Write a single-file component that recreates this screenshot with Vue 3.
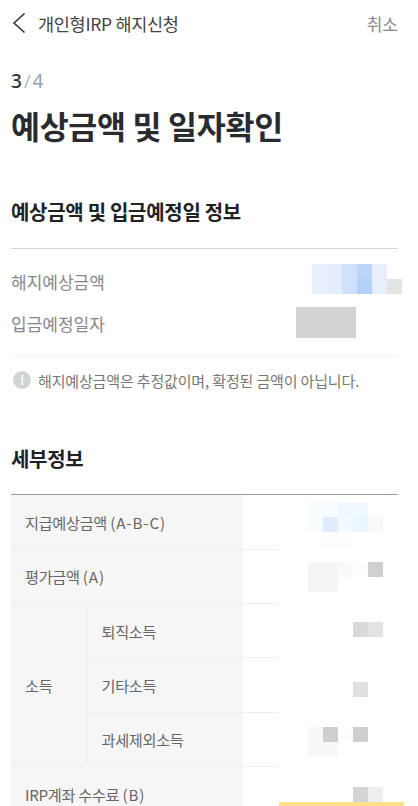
<script setup>
// 가려진 금액 영역 (15px 모자이크)
const amountTiles = [
  ['#e9effb', '#e4edfb', '#cfe0fc', '#bcd4fa', '#e8effb', null],
  ['#e9effb', '#e4edfb', '#cfe0fc', '#b3d0f9', '#e8effb', '#e4e4e4']
]

const tableTiles = [
  [0, 0, '#f7fcff'], [0, 1, '#f7fcff'], [0, 2, '#eff9ff'], [0, 3, '#eff9ff'],
  [1, 0, '#f7fcff'], [1, 1, '#e0ecfb'], [1, 2, '#f3faff'], [1, 3, '#eaf6ff'], [1, 4, '#f9f9f9'],
  [2, 1, '#fdfdfd'], [2, 2, '#fdfdfd'],
  [4, 0, '#f5f5f6'], [4, 1, '#f5f5f6'], [4, 2, '#f9f9f9'], [4, 3, '#fdfdfd'], [4, 4, '#d0d0d2'],
  [5, 0, '#f5f5f6'], [5, 1, '#f5f5f6'],
  [8, 3, '#d9d9db'], [8, 4, '#e3e3e5'],
  [12, 3, '#e0e0e2'],
  [15, 0, '#f8f8fa'], [15, 1, '#cfcfd2'], [15, 2, '#fdfdfd'], [15, 3, '#cfcfd2'],
  [16, 0, '#f8f8fa'], [16, 1, '#f8f8fa'],
  [19, 3, '#d5d5d8'], [19, 4, '#efeff0']
]

const tileStyle = ([row, col, color]) => ({
  gridRow: row + 1,
  gridColumn: col + 1,
  background: color
})
</script>

<template>
  <div class="page">
    <header class="topbar">
      <div class="topbar-left">
        <svg class="back" width="14" height="22" viewBox="0 0 14 22" fill="none">
          <path d="M12.5 1.5 2 11l10.5 9.5" stroke="#333" stroke-width="1.6" />
        </svg>
        <span class="topbar-title">개인형IRP 해지신청</span>
      </div>
      <span class="cancel">취소</span>
    </header>

    <div class="step"><b>3</b><i>/</i><span>4</span></div>
    <h1 class="title">예상금액 및 일자확인</h1>

    <h2 class="section-title first">예상금액 및 입금예정일 정보</h2>
    <div class="info">
      <div class="info-row">
        <span>해지예상금액</span>
        <div class="amount">
          <div v-for="(row, r) in amountTiles" :key="r" class="amount-row">
            <div v-for="(color, c) in row" :key="c" class="tile" :style="{ background: color || 'transparent' }"></div>
          </div>
        </div>
      </div>
      <div class="info-row">
        <span>입금예정일자</span>
        <div class="date-mask"></div>
      </div>
    </div>

    <p class="notice">
      <span class="notice-icon">!</span>
      해지예상금액은 추정값이며, 확정된 금액이 아닙니다.
    </p>

    <h2 class="section-title second">세부정보</h2>
    <div class="table-wrap">
      <table class="detail">
        <colgroup>
          <col class="col-group" />
          <col class="col-sub" />
          <col class="col-value" />
        </colgroup>
        <tbody>
          <tr><th colspan="2">지급예상금액 <span class="formula">(A-B-C)</span></th><td></td></tr>
          <tr><th colspan="2">평가금액 <span class="formula">(A)</span></th><td></td></tr>
          <tr><th rowspan="3" class="group">소득</th><th class="sub">퇴직소득</th><td></td></tr>
          <tr><th class="sub">기타소득</th><td></td></tr>
          <tr><th class="sub">과세제외소득</th><td></td></tr>
          <tr><th colspan="2">IRP계좌 수수료 <span class="formula">(B)</span></th><td></td></tr>
        </tbody>
      </table>
      <div class="mask">
        <div v-for="(tile, i) in tableTiles" :key="i" :style="tileStyle(tile)"></div>
      </div>
    </div>

    <div class="peek-button"></div>
  </div>
</template>

<style scoped>
.page {
  position: relative;
  height: 806px;
  overflow: hidden;
  padding: 0 20px 0 11px;
  box-sizing: border-box;
  background: #fff;
  color: #222;
  font-family: "Noto Sans CJK KR", "Noto Sans", sans-serif;
}

.topbar {
  display: flex;
  justify-content: space-between;
  align-items: center;
  height: 46px;
}

.topbar-left {
  display: flex;
  align-items: center;
  gap: 12px;
  padding-left: 1px;
}

.back {
  display: block;
}

.topbar-title {
  font-size: 17.5px;
  letter-spacing: -0.3px;
  color: #444;
}

.cancel {
  font-size: 17px;
  color: #888;
}

.step {
  margin-top: 23px;
  height: 24px;
  line-height: 24px;
  font-size: 19px;
  color: #9aa0ad;
  font-family: "Noto Sans", sans-serif;
}

.step b {
  font-weight: 500;
  color: #333;
}

.step i {
  font-style: normal;
  font-weight: 300;
  margin: 0 2px;
}

.title {
  margin: 9px 0 0;
  height: 46px;
  line-height: 46px;
  font-size: 31.5px;
  font-weight: 700;
  letter-spacing: -0.3px;
  color: #2a2b2f;
}

.section-title {
  margin: 0;
  height: 30px;
  line-height: 30px;
  font-size: 20px;
  font-weight: 700;
  letter-spacing: -0.3px;
  color: #222;
}

.first {
  margin-top: 49px;
}

.second {
  margin-top: 52px;
}

.info {
  margin-top: 21px;
  height: 109px;
  border-top: 1px solid #d6d6de;
  border-bottom: 1px solid #f1f1f3;
  box-sizing: border-box;
}

.info-row {
  display: flex;
  justify-content: space-between;
  height: 42px;
  font-size: 17px;
  color: #888;
}

.info-row span {
  line-height: 66px;
}

.amount {
  margin: 15px -4px 0 0;
}

.amount-row {
  display: flex;
}

.tile {
  width: 15px;
  height: 15px;
}

.date-mask {
  width: 60px;
  height: 31px;
  margin: 16px 42px 0 0;
  background: #d2d2d2;
}

.notice {
  display: flex;
  align-items: center;
  gap: 7px;
  margin: 11px 0 0 2px;
  height: 24px;
  font-size: 15px;
  letter-spacing: -0.15px;
  color: #777;
}

.notice-icon {
  flex: none;
  width: 18px;
  height: 18px;
  border-radius: 50%;
  background: #d3d4d8;
  color: #fff;
  font-size: 13px;
  font-weight: 700;
  line-height: 18px;
  text-align: center;
}

.table-wrap {
  position: relative;
  margin-top: 20px;
  border-top: 1px solid #9a9cab;
}

.detail {
  width: 268px;
  border-collapse: collapse;
  table-layout: fixed;
  font-size: 15.2px;
  letter-spacing: -0.3px;
}

.col-group {
  width: 76px;
}

.col-sub {
  width: 156px;
}

.col-value {
  width: 36px;
}

.detail th {
  height: 54.3px;
  padding: 0 0 0 14px;
  box-sizing: border-box;
  background: #f6f6f7;
  border-bottom: 1px solid #efeff1;
  font-weight: 400;
  text-align: left;
  color: #666;
}

.detail .group {
  border-right: 1px solid #efeff1;
}

.detail td {
  border-bottom: 1px solid #efeff1;
}

.formula {
  letter-spacing: 0.9px;
}

.mask {
  position: absolute;
  top: 0;
  bottom: 0;
  left: 268px;
  right: 0;
  padding: 7px 0 0 29px;
  background: #fff;
  display: grid;
  grid-template-columns: repeat(5, 15px);
  grid-auto-rows: 15px;
}

.peek-button {
  position: absolute;
  left: 279px;
  bottom: 0;
  width: 125px;
  height: 4px;
  background: #fde28a;
}
</style>

<style>
html,
body {
  margin: 0;
  background: #fff;
}
</style>
